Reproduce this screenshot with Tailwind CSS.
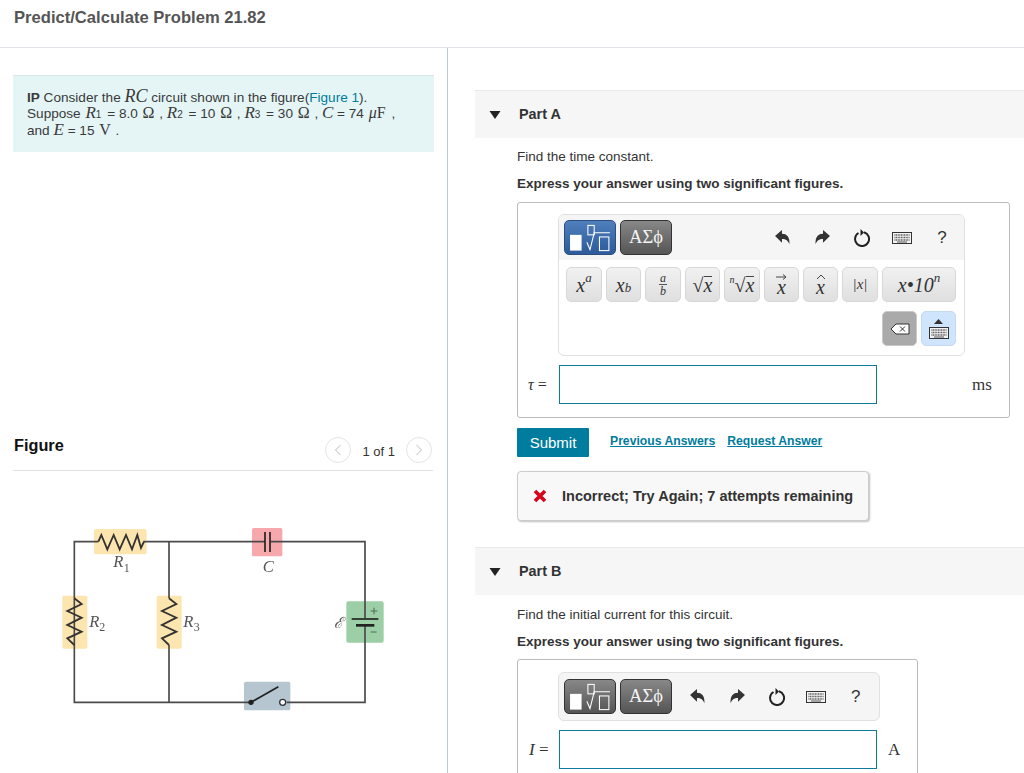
<!DOCTYPE html>
<html><head><meta charset="utf-8"><script src="https://cdn.jsdelivr.net/npm/@tailwindcss/browser@4"></script></head>
<body class="bg-white font-['Liberation_Sans',Arial,sans-serif] text-[#333]">
<svg width="0" height="0" class="absolute">
<defs>
<symbol id="undo" viewBox="0 0 16 16"><path d="M1 6.500 7.500 1v3.400c4.600 0 7.500 3 7 10-1.200-3.500-3.200-5-7-5V13z" fill="#333"/></symbol>
<symbol id="redo" viewBox="0 0 16 16"><path d="M15 6.500 8.500 1v3.400c-4.600 0-7.500 3-7 10 1.200-3.500 3.200-5 7-5V13z" fill="#333"/></symbol>
<symbol id="reset" viewBox="0 0 18 18"><path d="M5.500 4A7 7 0 1 0 11 3.300" fill="none" stroke="#222" stroke-width="2"/><path d="M7.500 0v7L11 3.500z" fill="#222"/></symbol>
<symbol id="kbd" viewBox="0 0 20 12"><rect x=".5" y=".5" width="19" height="11" fill="#f3f3f3" stroke="#333"/><path d="M2.500 3h15M2.500 5.500h15M2.500 8h15" stroke="#555" stroke-width="1.300" stroke-dasharray="1 .6"/><path d="M5 10h10" stroke="#555"/></symbol>
<symbol id="tmpl" viewBox="0 0 40 26"><rect x="1" y="10" width="11" height="15" fill="#fff"/><rect x="18" y="1" width="6" height="9" fill="none" stroke="#fff"/><path d="M17 17l3 7 4-16h15" fill="none" stroke="#fff"/><rect x="29" y="12" width="9" height="13" fill="none" stroke="#fff"/></symbol>
</defs>
</svg>
<div class="h-[773px] w-[1024px] overflow-hidden flex flex-col">
<header class="h-[48px] shrink-0 border-b border-[#e0e3e8] pl-[14px] pt-[8px]">
<h1 class="text-[16.600px] leading-[19px] font-bold text-[#555]">Predict/Calculate Problem 21.82</h1>
</header>
<main class="flex flex-1 min-h-0">
<section class="w-[448px] shrink-0 border-r border-[#b9c8da] pl-[13px] pr-[13px] pt-[27px]">
<div class="h-[77px] w-[421px] bg-[#e5f5f6] border-t border-[#d9e6e8] pl-[14px] pt-[13.500px] text-[13.600px] leading-[16.500px] text-[#3a3a3a]">
<b class="font-bold">IP</b> Consider the <i class="font-['Liberation_Serif',serif] text-[18px] leading-[0]">RC</i> circuit shown in the figure(<span class="text-[#007c9e]">Figure 1</span>).<br>
Suppose <i class="font-['Liberation_Serif',serif] text-[17px] leading-[0] ml-[1px]">R</i><span class="text-[10px] leading-[0] mr-[2px]">1</span> = 8.0 <span class="font-['Liberation_Serif',serif] text-[16px] leading-[0] mx-[1px]">Ω</span> , <i class="font-['Liberation_Serif',serif] text-[17px] leading-[0]">R</i><span class="text-[10px] leading-[0] mr-[2px]">2</span> = 10 <span class="font-['Liberation_Serif',serif] text-[16px] leading-[0] mx-[1px]">Ω</span> , <i class="font-['Liberation_Serif',serif] text-[17px] leading-[0]">R</i><span class="text-[10px] leading-[0] mr-[2px]">3</span> = 30 <span class="font-['Liberation_Serif',serif] text-[16px] leading-[0] mx-[1px]">Ω</span> , <i class="font-['Liberation_Serif',serif] text-[17px] leading-[0]">C</i> = 74 <span class="font-['Liberation_Serif',serif] text-[16px] leading-[0] ml-[1px] mr-[2px]"><i>μ</i>F</span> ,<br>
and <i class="font-['Liberation_Serif',serif] text-[17px] leading-[0]">E</i> = 15 <span class="font-['Liberation_Serif',serif] text-[16px] leading-[0] mx-[1px]">V</span> .
</div>
<div class="mt-[278px] w-[420px] h-[41px] border-b border-[#dfe3e6] flex items-start justify-between">
<h2 class="text-[16.300px] leading-[18px] font-bold text-[#111] mt-[6px] pl-[1px]">Figure</h2>
<div class="flex items-center gap-[11px] mt-[7px] pr-[1px] text-[13px] text-[#333]">
<span class="w-[26px] h-[26px] rounded-full border border-[#e4e4e4] flex items-center justify-center"><svg width="8" height="12" viewBox="0 0 8 12"><path d="M6.500 1 1.500 6l5 5" fill="none" stroke="#bbb"/></svg></span>
<span class="mt-[3px]">1 of 1</span>
<span class="w-[26px] h-[26px] rounded-full border border-[#e4e4e4] flex items-center justify-center"><svg width="8" height="12" viewBox="0 0 8 12"><path d="M1.500 1l5 5-5 5" fill="none" stroke="#bbb"/></svg></span>
</div>
</div>
<svg class="block ml-[17px] mt-[39px] blur-[0.4px]" width="370" height="220" viewBox="0 0 1110 660" xmlns="http://www.w3.org/2000/svg">
<rect x="192" y="57" width="158" height="76" rx="6" fill="#fde5b0"/>
<rect x="666" y="54" width="91" height="85" rx="5" fill="#f7a8ac"/>
<rect x="97" y="257" width="75" height="159" rx="5" fill="#fde5b0"/>
<rect x="380" y="257" width="75" height="159" rx="5" fill="#fde5b0"/>
<rect x="949" y="274" width="112" height="124" rx="6" fill="#9ccfa5"/>
<rect x="642" y="515" width="139" height="86" rx="5" fill="#b6c6d1"/>
<g fill="none" stroke="#4a4a4a" stroke-width="5">
<path d="M205 95H133V577H660M770 577H1005V348M1005 325V95H722M705 95H340M417 95V265M417 405V577H660"/>
</g>
<g fill="none" stroke="#333" stroke-width="5.500" stroke-linejoin="miter">
<path d="M205 95 214 75 232 118 251 75 269 118 288 75 306 118 322 75 333 114 342 95"/>
<path d="M133 265 155 282 112 303 155 323 112 345 155 365 112 385 133 405"/>
<path d="M417 265 439 282 396 303 439 323 396 345 439 365 396 385 417 405"/>
</g>
<path d="M705 66V126M720 66V126" stroke="#222" stroke-width="5"/>
<path d="M965 327H1045" stroke="#222" stroke-width="5"/><path d="M978 346H1033" stroke="#222" stroke-width="8"/>
<path d="M1022 303H1042M1032 293V313M1022 366H1040" stroke="#4d6d55" stroke-width="3"/>
<circle cx="663" cy="577" r="8" fill="#222"/><path d="M663 577 745 530" stroke="#222" stroke-width="5"/>
<circle cx="758" cy="577" r="9" fill="#fff" stroke="#333" stroke-width="4"/>
<g font-family="Liberation Serif,serif" fill="#555" font-size="50">
<text x="250" y="172" font-style="italic">R</text><text x="281" y="186" font-size="36">1</text>
<text x="698" y="185" font-style="italic">C</text>
<text x="178" y="350" font-style="italic">R</text><text x="208" y="362" font-size="36">2</text>
<text x="460" y="350" font-style="italic">R</text><text x="491" y="362" font-size="36">3</text>
<text x="912" y="354" font-style="italic" font-size="46">ℰ</text>
</g>
</svg>
</section>
<section class="flex-1 min-w-0 pl-[27px] pt-[42px] text-[13.500px] text-[#333]">
<div class="h-[48px] bg-[#f6f6f6] border-t border-[#e9e9e9] flex items-center pl-[14px]">
<svg width="12" height="8" viewBox="0 0 12 8"><path d="M.500 0h11L6 8z" fill="#222"/></svg>
<span class="ml-[18px] text-[14.400px] font-bold">Part A</span>
</div>
<p class="ml-[42px] mt-[11px] leading-[16px]">Find the time constant.</p>
<p class="ml-[42px] mt-[10px] leading-[18px] font-bold">Express your answer using two significant figures.</p>
<div class="ml-[42px] mt-[9px] w-[493px] h-[216px] border border-[#bbb] rounded-[3px] pt-[11px] pl-[40px]">
<div class="w-[407px] h-[142px] border border-[#e0e0e0] rounded-[6px] overflow-hidden">
<div class="h-[45px] bg-[#f5f5f5] flex items-center pl-[5px]">
<span class="w-[52px] h-[35px] rounded-[5px] border border-[#2c4f80] bg-linear-to-b from-[#4f7fbd] to-[#2c5a9a] flex items-center justify-center"><svg width="42" height="28"><use href="#tmpl"/></svg></span>
<span class="ml-[4px] w-[52px] h-[35px] rounded-[5px] border border-[#333] bg-linear-to-b from-[#888] to-[#555] flex items-center justify-center font-['Liberation_Serif',serif] text-[18.500px] text-[#f4f4f4]">ΑΣϕ</span>
<span class="ml-[90px] flex items-center">
<span class="w-[40px] flex justify-center"><svg width="17" height="17"><use href="#undo"/></svg></span>
<span class="w-[40px] flex justify-center"><svg width="17" height="17"><use href="#redo"/></svg></span>
<span class="w-[40px] flex justify-center"><svg width="18" height="18"><use href="#reset"/></svg></span>
<span class="w-[40px] flex justify-center"><svg width="20" height="12"><use href="#kbd"/></svg></span>
<span class="w-[40px] flex justify-center text-[17px] text-[#333]">?</span>
</span>
</div>
<div class="flex gap-[4px] pl-[7px] pt-[7px] font-['Liberation_Serif',serif] italic text-[#333] text-[20px]">
<span class="w-[36px] h-[35px] rounded-[5px] border border-[#d8d8d8] bg-linear-to-b from-[#f1f1f1] to-[#dfdfdf] flex items-center justify-center">x<sup class="text-[13px]">a</sup></span>
<span class="w-[35px] h-[35px] rounded-[5px] border border-[#d8d8d8] bg-linear-to-b from-[#f1f1f1] to-[#dfdfdf] flex items-center justify-center">x<sub class="text-[13px]">b</sub></span>
<span class="w-[36px] h-[35px] rounded-[5px] border border-[#d8d8d8] bg-linear-to-b from-[#f1f1f1] to-[#dfdfdf] flex flex-col items-center justify-center text-[12px] leading-[12px]"><span class="border-b border-[#555] px-[1px]">a</span><span>b</span></span>
<span class="w-[35px] h-[35px] rounded-[5px] border border-[#d8d8d8] bg-linear-to-b from-[#f1f1f1] to-[#dfdfdf] flex items-center justify-center not-italic">√<i class="border-t border-[#444] leading-[17px]">x</i></span>
<span class="w-[36px] h-[35px] rounded-[5px] border border-[#d8d8d8] bg-linear-to-b from-[#f1f1f1] to-[#dfdfdf] flex items-center justify-center not-italic"><i class="text-[10px] -mt-[10px]">n</i>√<i class="border-t border-[#444] leading-[17px]">x</i></span>
<span class="w-[35px] h-[35px] rounded-[5px] border border-[#d8d8d8] bg-linear-to-b from-[#f1f1f1] to-[#dfdfdf] flex flex-col items-center justify-center leading-[15px]"><svg width="11" height="6" viewBox="0 0 11 6"><path d="M0 3H10M7 .5 10 3 7 5.500" fill="none" stroke="#444"/></svg>x</span>
<span class="w-[35px] h-[35px] rounded-[5px] border border-[#d8d8d8] bg-linear-to-b from-[#f1f1f1] to-[#dfdfdf] flex flex-col items-center justify-center leading-[15px]"><svg width="10" height="6" viewBox="0 0 10 6"><path d="M1 5 5 1l4 4" fill="none" stroke="#444"/></svg>x</span>
<span class="w-[36px] h-[35px] rounded-[5px] border border-[#d8d8d8] bg-linear-to-b from-[#f1f1f1] to-[#dfdfdf] flex items-center justify-center text-[15px]">|x|</span>
<span class="w-[74px] h-[35px] rounded-[5px] border border-[#d8d8d8] bg-linear-to-b from-[#f1f1f1] to-[#dfdfdf] flex items-center justify-center">x•10<sup class="text-[13px]">n</sup></span>
</div>
<div class="flex justify-end gap-[4px] pr-[8px] pt-[9px]">
<span class="w-[35px] h-[35px] rounded-[5px] border border-[#c8c8c8] bg-[#aaa] flex items-center justify-center"><svg width="20" height="12" viewBox="0 0 20 12"><path d="M6 1H19V11H6L1 6z" fill="#fff" stroke="#333"/><path d="M10 3.500 15 8.500M15 3.500 10 8.500" stroke="#333"/></svg></span>
<span class="w-[35px] h-[35px] rounded-[5px] border border-[#c5d8ee] bg-[#cfe5fd] flex flex-col items-center justify-center gap-[3px]"><svg width="9" height="5" viewBox="0 0 9 5"><path d="M0 5 4.500 0 9 5z" fill="#333"/></svg><svg width="20" height="12"><use href="#kbd"/></svg></span>
</div>
</div>
<div class="flex items-center mt-[9px] -ml-[40px]">
<span class="w-[41px] pl-[10px] font-['Liberation_Serif',serif] text-[16px]"><i>τ</i> =</span>
<span class="w-[318px] h-[39px] border border-[#0f7a99] block"></span>
<span class="ml-[95px] font-['Liberation_Serif',serif] text-[17px]">ms</span>
</div>
</div>
<div class="ml-[42px] mt-[10px] flex items-center">
<span class="w-[72px] h-[29px] bg-[#007c9e] rounded-[1px] text-white text-[15px] pt-[1px] flex items-center justify-center">Submit</span>
<a class="ml-[21px] -mt-[2px] text-[12.200px] font-bold text-[#007c9e] underline">Previous Answers</a>
<a class="ml-[12px] -mt-[2px] text-[12.200px] font-bold text-[#007c9e] underline">Request Answer</a>
</div>
<div class="ml-[42px] mt-[14px] w-[352px] h-[50px] rounded-[4px] border border-[#ccc] bg-[#f8f8f8] shadow-[1px_1px_2px_rgba(0,0,0,0.25)] flex items-center pl-[15px]">
<svg width="14" height="14" viewBox="0 0 14 14"><path d="M2 2 12 12M12 2 2 12" stroke="#d9001b" stroke-width="3.600"/></svg>
<span class="ml-[15px] text-[14.500px] pt-[2px] font-bold text-[#333]">Incorrect; Try Again; 7 attempts remaining</span>
</div>
<div class="mt-[26px] h-[48px] bg-[#f6f6f6] border-t border-[#e9e9e9] flex items-center pl-[14px]">
<svg width="12" height="8" viewBox="0 0 12 8"><path d="M.500 0h11L6 8z" fill="#222"/></svg>
<span class="ml-[18px] text-[14.400px] font-bold">Part B</span>
</div>
<p class="ml-[42px] mt-[12px] leading-[16px]">Find the initial current for this circuit.</p>
<p class="ml-[42px] mt-[10px] leading-[18px] font-bold">Express your answer using two significant figures.</p>
<div class="ml-[42px] mt-[8px] w-[401px] h-[130px] border border-[#bbb] rounded-[3px] pt-[12px] pl-[40px]">
<div class="w-[322px] h-[49px] bg-[#f5f5f5] border border-[#e0e0e0] rounded-[6px] flex items-center pl-[5px]">
<span class="w-[52px] h-[35px] rounded-[5px] border border-[#333] bg-linear-to-b from-[#888] to-[#555] flex items-center justify-center"><svg width="42" height="28"><use href="#tmpl"/></svg></span>
<span class="ml-[4px] w-[52px] h-[35px] rounded-[5px] border border-[#333] bg-linear-to-b from-[#888] to-[#555] flex items-center justify-center font-['Liberation_Serif',serif] text-[18.500px] text-[#f4f4f4]">ΑΣϕ</span>
<span class="ml-[6px] flex items-center">
<span class="w-[39.500px] flex justify-center"><svg width="17" height="17"><use href="#undo"/></svg></span>
<span class="w-[39.500px] flex justify-center"><svg width="17" height="17"><use href="#redo"/></svg></span>
<span class="w-[39.500px] flex justify-center"><svg width="18" height="18"><use href="#reset"/></svg></span>
<span class="w-[39.500px] flex justify-center"><svg width="20" height="12"><use href="#kbd"/></svg></span>
<span class="w-[39.500px] flex justify-center text-[17px] text-[#333]">?</span>
</span>
</div>
<div class="flex items-center mt-[9px] -ml-[40px]">
<span class="w-[41px] pl-[11px] font-['Liberation_Serif',serif] text-[17px]"><i>I</i> =</span>
<span class="w-[318px] h-[39px] border border-[#0f7a99] block"></span>
<span class="ml-[11px] font-['Liberation_Serif',serif] text-[17px]">A</span>
</div>
</div>
</section>
</main>
</div>
</body></html>
